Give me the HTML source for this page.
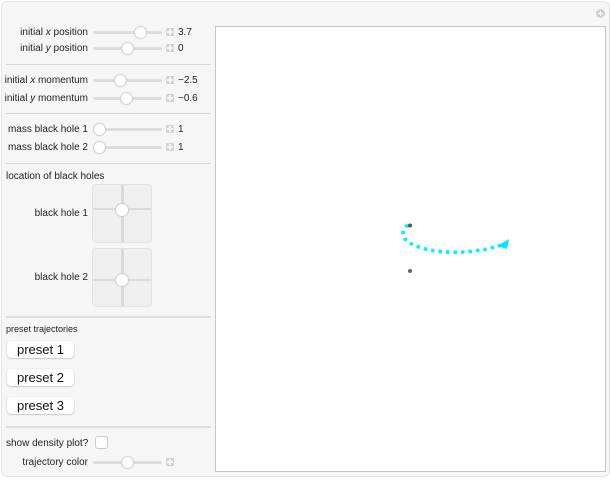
<!DOCTYPE html>
<html><head><style>
body{margin:0;width:612px;height:480px;background:#fff;font-family:"Liberation Sans",sans-serif;font-size:10px;color:#222;position:relative;overflow:hidden}
.panel{position:absolute;left:1px;top:1px;width:609px;height:476px;background:#f6f6f6;border-radius:6px;border:1px solid #e6e6e6;box-sizing:border-box}
.a{position:absolute}
.lbl{position:absolute;text-align:right;width:88px;left:0;line-height:12px;margin-top:1px}
.track{position:absolute;left:93px;width:69px;height:3px;background:#dcdcdc;border-radius:2px}
.thumb{position:absolute;width:11px;height:11px;border-radius:50%;background:#fff;box-shadow:0 0 1px 1px #ccc}
.plus{position:absolute;left:166px;width:8px;height:8px;background:#d4d4d4;border-radius:1px}
.plus:before{content:"";position:absolute;left:3px;top:1px;width:2px;height:6px;background:#f4f4f4}
.plus:after{content:"";position:absolute;left:1px;top:3px;width:6px;height:2px;background:#f4f4f4}
.val{position:absolute;left:178px;line-height:12px;margin-top:1px}
.sep{position:absolute;left:6px;width:205px;height:1px;background:#d8d8d8}
.pad{position:absolute;left:92px;width:60px;height:59px;background:#efefef;border:1px solid #e3e3e3;border-radius:4px;box-sizing:border-box}
.pad .v{position:absolute;left:28px;top:0;width:3px;height:100%;background:#dadada}
.pad .h{position:absolute;top:23px;left:0;width:100%;height:2px;background:#dadada}
.btn{position:absolute;left:7px;width:67px;height:17px;background:#fff;border-radius:4px;box-shadow:0 0.5px 1.5px #aaa;font-size:13px;text-align:center;line-height:17px;color:#111}
</style></head><body>
<div class="panel"></div>
<div class="a" style="left:596px;top:9px;width:9px;height:9px;border-radius:50%;background:#cfcfcf"></div>
<div class="a" style="left:599.8px;top:11px;width:1.5px;height:5px;background:#fff"></div>
<div class="a" style="left:598px;top:12.8px;width:5px;height:1.5px;background:#fff"></div>
<div class="a" style="left:215px;top:26px;width:391px;height:446px;background:#fff;border:1px solid #c4c4c4;box-sizing:border-box"></div>

<svg class="a" style="left:0;top:0" width="612" height="480">
<path d="M408 225 C400 230 402 240 412 244 C430 254 470 256 505 244" fill="none" stroke="#00f0ff" stroke-width="3.5" stroke-dasharray="3.5 4"/>
<path d="M497 246 L509 239 L507 249 Z" fill="#00e8f8"/>
<circle cx="410" cy="225.5" r="2" fill="#555"/>
<circle cx="410" cy="271" r="2" fill="#666"/>
</svg>

<div class="lbl" style="top:26px">initial <i>x</i> position</div>
<div class="track" style="top:31px"></div><div class="thumb" style="left:135px;top:27px"></div>
<div class="plus" style="top:28px"></div><div class="val" style="top:26px">3.7</div>
<div class="lbl" style="top:42px">initial <i>y</i> position</div>
<div class="track" style="top:47px"></div><div class="thumb" style="left:122px;top:43px"></div>
<div class="plus" style="top:44px"></div><div class="val" style="top:42px">0</div>
<div class="sep" style="top:64px"></div>

<div class="lbl" style="top:74px">initial <i>x</i> momentum</div>
<div class="track" style="top:79px"></div><div class="thumb" style="left:115px;top:75px"></div>
<div class="plus" style="top:76px"></div><div class="val" style="top:74px">−2.5</div>
<div class="lbl" style="top:92px">initial <i>y</i> momentum</div>
<div class="track" style="top:97px"></div><div class="thumb" style="left:121px;top:93px"></div>
<div class="plus" style="top:94px"></div><div class="val" style="top:92px">−0.6</div>
<div class="sep" style="top:113px"></div>

<div class="lbl" style="top:123px">mass black hole 1</div>
<div class="track" style="top:128px"></div><div class="thumb" style="left:94px;top:124px"></div>
<div class="plus" style="top:125px"></div><div class="val" style="top:123px">1</div>
<div class="lbl" style="top:141px">mass black hole 2</div>
<div class="track" style="top:146px"></div><div class="thumb" style="left:94px;top:142px"></div>
<div class="plus" style="top:143px"></div><div class="val" style="top:141px">1</div>
<div class="sep" style="top:163px"></div>

<div class="a" style="left:6px;top:171px">location of black holes</div>
<div class="pad" style="top:184px"><div class="v"></div><div class="h"></div></div>
<div class="thumb" style="left:116px;top:204px;width:12px;height:12px"></div>
<div class="lbl" style="top:207px">black hole 1</div>
<div class="pad" style="top:248px"><div class="v"></div><div class="h" style="top:30px"></div></div>
<div class="thumb" style="left:116px;top:274px;width:12px;height:12px"></div>
<div class="lbl" style="top:271px">black hole 2</div>
<div class="sep" style="top:316px;height:2px;background:#e0e0e0"></div>

<div class="a" style="left:6px;top:324px;font-size:9px">preset trajectories</div>
<div class="btn" style="top:341px">preset 1</div>
<div class="btn" style="top:369px">preset 2</div>
<div class="btn" style="top:397px">preset 3</div>
<div class="sep" style="top:426px;height:2px;background:#e0e0e0"></div>

<div class="a" style="left:6px;top:438px">show density plot?</div>
<div class="a" style="left:95px;top:436px;width:13px;height:13px;background:#fff;border:1px solid #ccc;border-radius:3px;box-sizing:border-box"></div>
<div class="lbl" style="top:456px">trajectory color</div>
<div class="track" style="top:461px"></div><div class="thumb" style="left:122px;top:457px"></div>
<div class="plus" style="top:458px"></div>
</body></html>
